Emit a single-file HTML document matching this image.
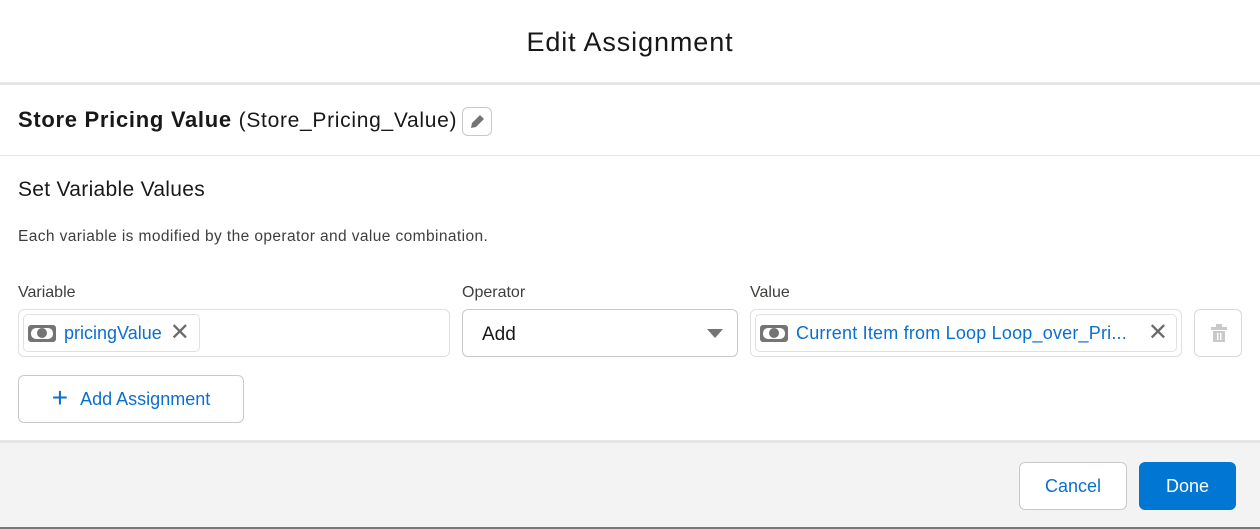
<!DOCTYPE html>
<html><head><meta charset="utf-8"><style>
*{box-sizing:border-box;margin:0;padding:0}
body{width:1260px;height:529px;background:#fff;font-family:"Liberation Sans",sans-serif;color:#181818;position:relative;overflow:hidden}
.abs{position:absolute}
.hdr{left:0;top:0;width:1260px;height:85px;border-bottom:3px solid #e5e5e5}
.title{left:0;width:1260px;top:27px;text-align:center;font-size:27px;color:#181818;letter-spacing:0.9px}
.line{left:0;width:1260px;height:1px;background:#e5e5e5}
.lbl{font-size:16px;color:#3e3e3c}
.box{border:1px solid #e0e0e0;border-radius:6px;background:#fff}
.pill{border:1px solid #e0e0e0;border-radius:5px;background:#fff;height:38px;display:flex;align-items:center;padding-left:4px;font-size:18px;color:#0b6fd0}
.money{width:28px;height:17px;background:#747474;border-radius:3px;position:relative;margin-right:8px;flex:none}
.money:before{content:"";position:absolute;left:3px;top:3px;width:22px;height:11px;background:#fff;border-radius:5px}
.money:after{content:"";position:absolute;left:9px;top:3px;width:10px;height:10px;background:#747474;border-radius:50%}
.x{font-size:24px;color:#6b6b6b;margin-left:8px;line-height:1}
.btn{border:1px solid #c9c9c9;border-radius:6px;background:#fff;display:flex;align-items:center;justify-content:center;font-size:18px;color:#0b6fd0}
</style></head><body>
<div class="abs hdr"></div>
<div class="abs title">Edit Assignment</div>
<div class="abs" style="left:18px;top:107px;font-size:22px;white-space:nowrap;letter-spacing:0.7px"><b>Store Pricing Value</b> <span style="font-size:21px">(Store_Pricing_Value)</span></div>
<div class="abs box" style="left:462px;top:107px;width:30px;height:29px;border-color:#c9c9c9">
<svg width="28" height="27" viewBox="0 0 28 27"><path d="M8 20 L9 15 L17 7 L21 11 L13 19 Z" fill="#747474"/></svg></div>
<div class="abs line" style="top:155px"></div>
<div class="abs" style="left:18px;top:178px;font-size:21px;letter-spacing:0.3px">Set Variable Values</div>
<div class="abs" style="left:18px;top:228px;font-size:15.5px;color:#3e3e3c;letter-spacing:0.4px">Each variable is modified by the operator and value combination.</div>
<div class="abs lbl" style="left:18px;top:284px">Variable</div>
<div class="abs lbl" style="left:462px;top:284px">Operator</div>
<div class="abs lbl" style="left:750px;top:284px">Value</div>
<div class="abs box" style="left:18px;top:309px;width:432px;height:48px"></div>
<div class="abs pill" style="left:23px;top:314px;width:177px"><span class="money"></span>pricingValue<span class="x">✕</span></div>
<div class="abs box" style="left:462px;top:309px;width:276px;height:48px;border-color:#c9c9c9;font-size:19px;padding:14px 19px">Add
<svg class="abs" style="left:244px;top:19px" width="16" height="10"><path d="M0 0H16L8 9Z" fill="#747474"/></svg></div>
<div class="abs box" style="left:750px;top:309px;width:432px;height:48px"></div>
<div class="abs pill" style="left:755px;top:314px;width:422px"><span class="money"></span><span style="letter-spacing:0.2px">Current Item from Loop Loop_over_Pri...</span><span class="x" style="margin-left:auto;margin-right:8px">✕</span></div>
<div class="abs box" style="left:1194px;top:309px;width:48px;height:48px;border-color:#d8d8d8">
<svg class="abs" style="left:15px;top:14px" width="18" height="20"><rect x="6" y="0" width="6" height="3" fill="#c9c9c9"/><rect x="1" y="3" width="16" height="3" fill="#c9c9c9"/><rect x="3" y="7" width="12" height="11" fill="#c9c9c9"/><rect x="7" y="9" width="1.5" height="7" fill="#fff"/><rect x="10" y="9" width="1.5" height="7" fill="#fff"/></svg></div>
<div class="abs btn" style="left:18px;top:375px;width:226px;height:48px"><span style="font-size:28px;margin-right:12px;font-weight:300;margin-top:-3px">+</span>Add Assignment</div>
<div class="abs" style="left:0;top:440px;width:1260px;height:89px;background:#f3f3f3;border-top:3px solid #e5e5e5"></div>
<div class="abs btn" style="left:1019px;top:462px;width:108px;height:48px">Cancel</div>
<div class="abs btn" style="left:1139px;top:462px;width:97px;height:48px;background:#0176d3;border-color:#0176d3;color:#fff">Done</div>
<div class="abs" style="left:0;top:527px;width:1260px;height:2px;background:#777"></div>
</body></html>
